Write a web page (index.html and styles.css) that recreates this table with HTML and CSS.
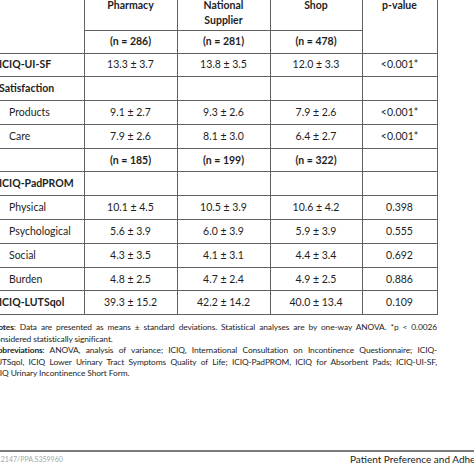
FILE: index.html
```html
<!DOCTYPE html>
<html>
<head>
<meta charset="utf-8">
<link rel="stylesheet" href="styles.css">
</head>
<body>
<div class="page">
  <table class="data">
    <colgroup>
      <col class="c1"><col class="c2"><col class="c3"><col class="c4"><col class="c5">
    </colgroup>
    <thead>
      <tr class="h1">
        <th rowspan="2"></th>
        <th>Pharmacy</th>
        <th>National<br>Supplier</th>
        <th>Shop</th>
        <th rowspan="2">p-value</th>
      </tr>
      <tr class="h2">
        <th>(n = 286)</th>
        <th>(n = 281)</th>
        <th>(n = 478)</th>
      </tr>
    </thead>
    <tbody>
      <tr><td class="lbl">ICIQ-UI-SF</td><td>13.3 ± 3.7</td><td>13.8 ± 3.5</td><td>12.0 ± 3.3</td><td>&lt;0.001*</td></tr>
      <tr><td class="lbl">Satisfaction</td><td></td><td></td><td></td><td></td></tr>
      <tr><td class="sub">Products</td><td>9.1 ± 2.7</td><td>9.3 ± 2.6</td><td>7.9 ± 2.6</td><td>&lt;0.001*</td></tr>
      <tr><td class="sub">Care</td><td>7.9 ± 2.6</td><td>8.1 ± 3.0</td><td>6.4 ± 2.7</td><td>&lt;0.001*</td></tr>
      <tr class="nrow"><td></td><td>(n = 185)</td><td>(n = 199)</td><td>(n = 322)</td><td></td></tr>
      <tr><td class="lbl">ICIQ-PadPROM</td><td></td><td></td><td></td><td></td></tr>
      <tr><td class="sub">Physical</td><td>10.1 ± 4.5</td><td>10.5 ± 3.9</td><td>10.6 ± 4.2</td><td>0.398</td></tr>
      <tr><td class="sub">Psychological</td><td>5.6 ± 3.9</td><td>6.0 ± 3.9</td><td>5.9 ± 3.9</td><td>0.555</td></tr>
      <tr><td class="sub">Social</td><td>4.3 ± 3.5</td><td>4.1 ± 3.1</td><td>4.4 ± 3.4</td><td>0.692</td></tr>
      <tr><td class="sub">Burden</td><td>4.8 ± 2.5</td><td>4.7 ± 2.4</td><td>4.9 ± 2.5</td><td>0.886</td></tr>
      <tr><td class="lbl">ICIQ-LUTSqol</td><td>39.3 ± 15.2</td><td>42.2 ± 14.2</td><td>40.0 ± 13.4</td><td>0.109</td></tr>
    </tbody>
  </table>

  <div class="notes">
    <div class="jl"><b>Notes</b>: Data are presented as means ± standard deviations. Statistical analyses are by one-way ANOVA. *p &lt; 0.0026</div>
    <div class="ll">considered statistically significant.</div>
    <div class="jl"><b>Abbreviations</b>: ANOVA, analysis of variance; ICIQ, International Consultation on Incontinence Questionnaire; ICIQ-</div>
    <div class="jl">LUTSqol, ICIQ Lower Urinary Tract Symptoms Quality of Life; ICIQ-PadPROM, ICIQ for Absorbent Pads; ICIQ-UI-SF,</div>
    <div class="ll">ICIQ Urinary Incontinence Short Form.</div>
  </div>

  <div class="footer">
    <span class="doi">10.2147/PPA.S359960</span>
    <span class="journal">Patient Preference and Adherence</span>
  </div>
</div>
</body>
</html>
```

FILE: styles.css
```css
html, body {
  margin: 0;
  padding: 0;
  background: #fff;
  overflow: hidden;
}
body {
  width: 474px;
  height: 474px;
  font-family: "Lato", "Open Sans", sans-serif;
  color: #1e1e1e;
}
.page {
  margin-left: -8px;
  margin-top: -6px;
  width: 445px;
}
.data {
  border-collapse: collapse;
  table-layout: fixed;
  width: 445px;
  font-size: 10.5px;
}
.c1 { width: 92px; }
.c2 { width: 93px; }
.c3 { width: 93px; }
.c4 { width: 92px; }
.c5 { width: 75px; }

.data th, .data td {
  border: 1px solid #606060;
  padding: 0 4px;
  text-align: center;
  vertical-align: middle;
  line-height: 15px;
  white-space: nowrap;
}
.data tr:first-child th { border-top: none; }
.data th:first-child, .data td:first-child { border-left: none; }
.data th { font-weight: 700; }
.h1 th {
  height: 36px;
  vertical-align: top;
  padding-top: 3.5px;
  box-sizing: border-box;
}
.h2 th { height: 23px; box-sizing: border-box; }
.data tbody tr { height: 23.8px; }
.data td.lbl {
  text-align: left;
  font-weight: 700;
  padding-left: 7px;
  font-size: 10.5px;
}
.data td.sub {
  text-align: left;
  padding-left: 17px;
}
.nrow td { font-weight: 700; }

.notes {
  margin-top: 7px;
  font-size: 8.4px;
  letter-spacing: -0.1px;
  line-height: 11.5px;
  white-space: nowrap;
}
.notes .jl {
  text-align: justify;
  text-align-last: justify;
  white-space: normal;
}
.notes .ll { text-align: left; }
.notes b { font-weight: 700; }

.footer {
  margin-top: 70px;
  width: 600px;
  border-top: 2px solid #7a7a7a;
  display: flex;
  align-items: center;
  padding-top: 1px;
}
.doi {
  flex: 0 0 auto;
  width: 359px;
  margin-left: -1px;
  font-size: 7px;
  color: #a8a8a8;
}
.journal {
  flex: 0 0 auto;
  font-size: 10px;
  white-space: nowrap;
  color: #222;
}
```
